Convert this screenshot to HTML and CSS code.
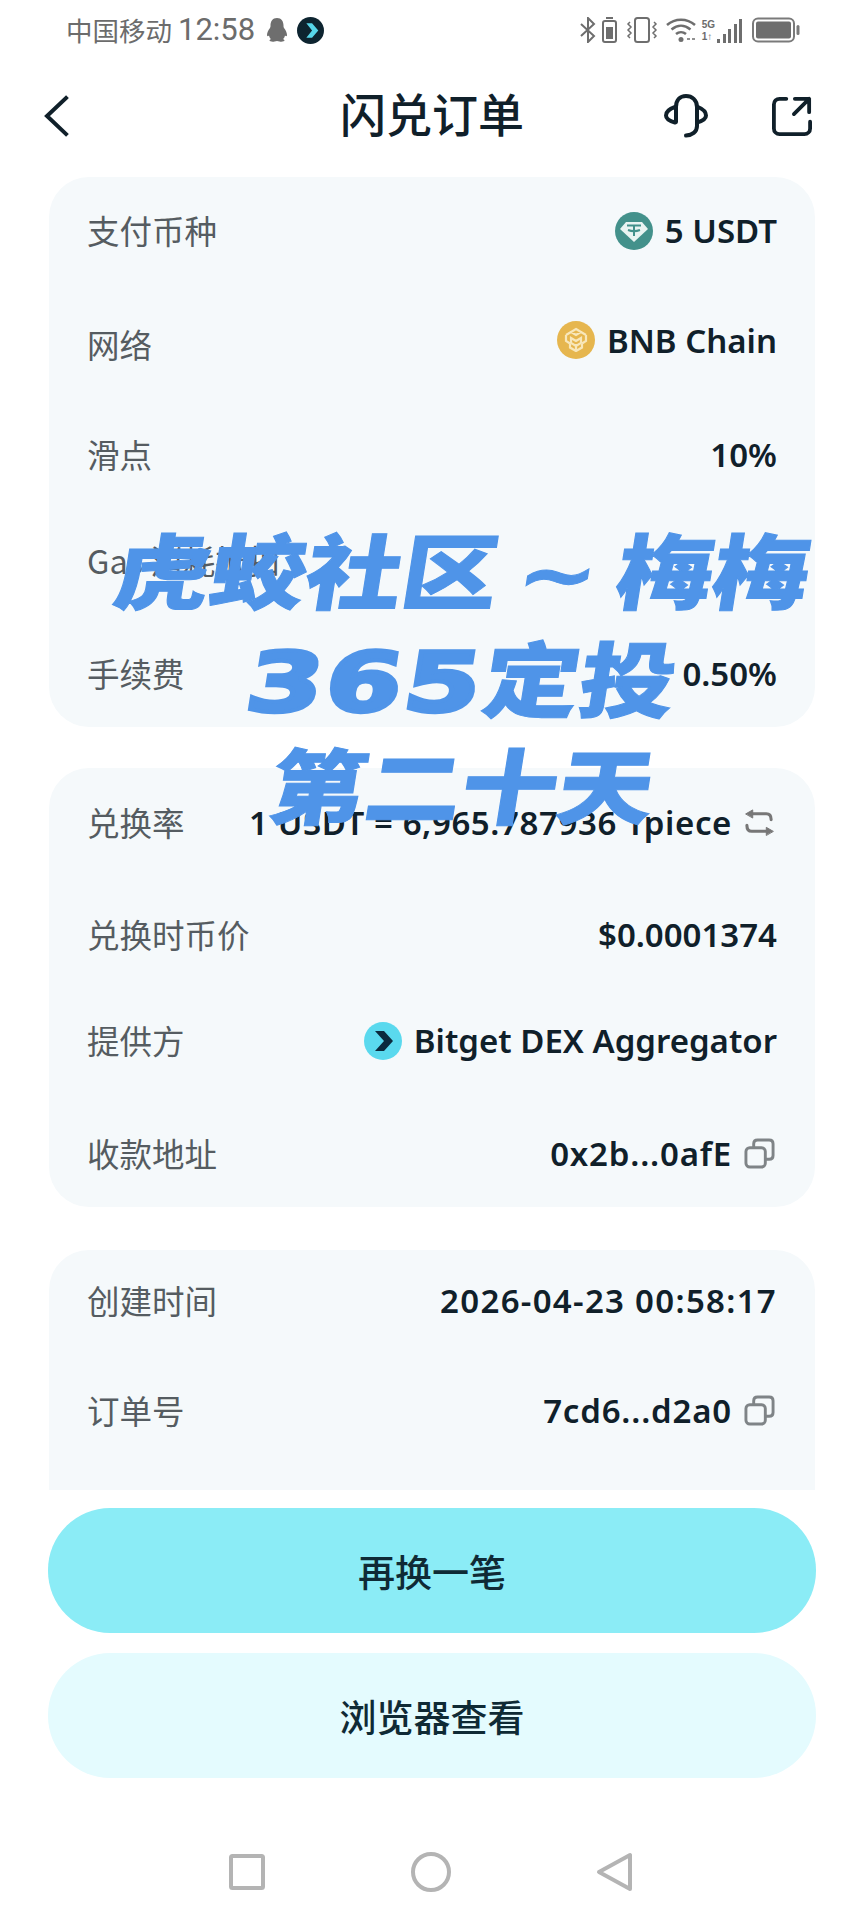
FILE: index.html
```html
<!DOCTYPE html>
<html lang="zh-CN">
<head>
<meta charset="utf-8">
<title>闪兑订单</title>
<link rel="stylesheet" href="styles.css">
</head>
<body>
<div class="screen">
  <div class="status">
    <div class="status-left">
      <span class="carrier">中国移动</span>
      <span class="clock">12:58</span>
      <svg class="ic-qq" viewBox="0 0 22 26"><path fill="#6e6e6e" d="M11 1c4.500 0 6.500 3.500 6.500 7.500 0 1 0 1.500.5 2.500 1.500 2 3 4.500 3 7 0 1.500-1 1.500-2 .5-.5 2-1 3-2 3.500 1 .5 1.500 1 1.500 1.500 0 1-3 1.500-5 1-1-.2-2-.4-2.500-.4s-1.500.2-2.500.4c-2 .5-5 0-5-1 0-.5.5-1 1.500-1.500-1-.5-1.500-1.500-2-3.500-1 1-2 1-2-.5 0-2.500 1.500-5 3-7 .5-1 .5-1.500.5-2.500C4.500 4.500 6.500 1 11 1z"/></svg>
      <svg class="ic-bg" viewBox="0 0 26 26"><circle cx="13" cy="13" r="13" fill="#0d2430"/><path d="M9 6h5.500l6 7-6 7H9l5.500-7z" fill="#56d6ea"/></svg>
    </div>
    <div class="status-right">
      <svg class="ic-bt" viewBox="0 0 18 26" fill="none" stroke="#6e6e6e" stroke-width="2"><path d="M2 7l13 12-6 6V1l6 6L2 19"/></svg>
      <svg class="ic-sim" viewBox="0 0 15 26" fill="none" stroke="#6e6e6e" stroke-width="2"><rect x="1" y="4" width="13" height="21" rx="2"/><path d="M4 1h7"/><rect x="4" y="10" width="7" height="12" fill="#6e6e6e" stroke="none"/></svg>
      <svg class="ic-vib" viewBox="0 0 32 26" fill="none" stroke="#6e6e6e" stroke-width="2"><rect x="9" y="1" width="14" height="24" rx="2.500"/><path d="M4 5l-2 2 3 3-3 3 3 3-3 3 2 2M28 5l2 2-3 3 3 3-3 3 3 3-2 2" stroke-width="1.500"/></svg>
      <svg class="ic-wifi" viewBox="0 0 30 26" fill="none" stroke="#6e6e6e" stroke-width="2.500"><path d="M1 8c8-7 20-7 28 0M5.500 12.500c6-5 13-5 19 0M10 17c3-2.500 7-2.500 10 0"/><circle cx="15" cy="22.500" r="2.500" fill="#6e6e6e" stroke="none"/><path d="M21 22h3M26 22h3" stroke-width="1.500"/></svg>
      <div class="signal">
        <div class="sig-labels"><span>5G</span><span>1↑</span></div>
        <div class="bars"><i class="b1"></i><i class="b2"></i><i class="b3"></i><i class="b4"></i><i class="b5"></i></div>
      </div>
      <svg class="ic-batt" viewBox="0 0 48 26"><rect x="1" y="1.500" width="41" height="23" rx="5" fill="none" stroke="#7a7a7a" stroke-width="2"/><rect x="4" y="4.500" width="35" height="17" rx="2" fill="#6e6e6e"/><rect x="44.500" y="8" width="3" height="10" rx="1.500" fill="#7a7a7a"/></svg>
    </div>
  </div>

  <header class="nav">
    <svg class="ic-back" viewBox="0 0 26 42" fill="none" stroke="#10202a" stroke-width="4" stroke-linecap="square"><path d="M23 3L4 21l19 18"/></svg>
    <h1 class="title">闪兑订单</h1>
    <div class="nav-actions">
      <svg class="ic-support" viewBox="0 0 44 44" fill="none" stroke="#10202a" stroke-width="4" stroke-linecap="round"><path d="M12 28V13C12 6 16 2 22 2s11 4 11 11v19c0 6-5 9-11 9.500"/><path d="M11 13C5 15 2 18.500 2 21.500S5.500 27 11 28.500M34 13c5 2 8 5.500 8 8.500s-3.500 5.500-9 7"/></svg>
      <svg class="ic-share" viewBox="0 0 42 42" fill="none" stroke="#10202a" stroke-width="4" stroke-linecap="round" stroke-linejoin="round"><path d="M15 3H8C4.500 3 2 5.500 2 9v25c0 3.500 2.500 6 6 6h26c3.500 0 6-2.500 6-6v-7"/><path d="M23 19L39 3M24 3h15v14"/></svg>
    </div>
  </header>

  <main class="content">
    <section class="card card-a">
      <div class="row r1"><span class="label">支付币种</span><span class="value">
        <svg class="coin" viewBox="0 0 38 38"><circle cx="19" cy="19" r="19" fill="#43918b"/><path d="M11 10h16l6 7-14 13L5 17z" fill="#e9f4f2"/><path d="M12 13.500h14M19 13.500V24M13 18c4 1.500 8 1.500 12 0" fill="none" stroke="#43918b" stroke-width="2"/></svg>5 USDT</span></div>
      <div class="row r2"><span class="label">网络</span><span class="value value-up">
        <svg class="coin" viewBox="0 0 38 38"><circle cx="19" cy="19" r="19" fill="#e6b64e"/><g fill="none" stroke="#f8e7bb" stroke-width="2.200"><path d="M19 8l5 3-5 3-5-3zM9 14l5-3M29 14l-5-3M9 14v6l4 2.500M29 14v6l-4 2.500M19 30l-6-3.500V23M19 30l6-3.500V23M19 30v-7M14 17l5 3 5-3v5l-5 3-5-3z"/></g></svg>BNB Chain</span></div>
      <div class="row r3"><span class="label">滑点</span><span class="value">10%</span></div>
      <div class="row r4"><span class="label">Gas 消耗抵扣</span></div>
      <div class="row r5"><span class="label">手续费</span><span class="value">0.50%</span></div>
    </section>

    <section class="card card-b">
      <div class="row r6"><span class="label">兑换率</span><span class="value value-rate">1 USDT = 6,965.787936 Tpiece
        <svg class="act" viewBox="0 0 32 30" fill="none" stroke="#777" stroke-width="3.200" stroke-linecap="round" stroke-linejoin="round"><path d="M7 6h16c3 0 5 2 5 6M3 18c0 4 2 6 5 6h16"/><path d="M2 6l7-4v8zM30 24l-7-4v8z" fill="#777" stroke-width="1"/></svg></span></div>
      <div class="row r7"><span class="label">兑换时币价</span><span class="value">$0.0001374</span></div>
      <div class="row r8"><span class="label">提供方</span><span class="value">
        <svg class="coin" viewBox="0 0 38 38"><circle cx="19" cy="19" r="19" fill="#5ad9ee"/><path d="M11 9h9l9 10-9 10h-9l9-10z" fill="#0b2a3d"/></svg>Bitget DEX Aggregator</span></div>
      <div class="row r9"><span class="label">收款地址</span><span class="value value-hash">0x2b...0afE
        <svg class="act" viewBox="0 0 32 32" fill="none" stroke="#7f8487" stroke-width="3"><rect x="2" y="10" width="20" height="20" rx="4"/><path d="M10 10V6c0-2.500 1.500-4 4-4h12c2.500 0 4 1.500 4 4v12c0 2.500-1.500 4-4 4h-4"/></svg></span></div>
    </section>

    <section class="card card-c">
      <div class="row r10"><span class="label">创建时间</span><span class="value value-date">2026-04-23 00:58:17</span></div>
      <div class="row r11"><span class="label">订单号</span><span class="value value-hash">7cd6...d2a0
        <svg class="act" viewBox="0 0 32 32" fill="none" stroke="#7f8487" stroke-width="3"><rect x="2" y="10" width="20" height="20" rx="4"/><path d="M10 10V6c0-2.500 1.500-4 4-4h12c2.500 0 4 1.500 4 4v12c0 2.500-1.500 4-4 4h-4"/></svg></span></div>
    </section>
  </main>

  <div class="actions">
    <button class="btn btn-primary">再换一笔</button>
    <button class="btn btn-soft">浏览器查看</button>
  </div>

  <nav class="sysnav">
    <svg class="sys" viewBox="0 0 40 40" fill="none" stroke="#b4b4b4" stroke-width="4"><rect x="4" y="4" width="32" height="32" rx="1.500"/></svg>
    <svg class="sys" viewBox="0 0 40 40" fill="none" stroke="#b4b4b4" stroke-width="4"><circle cx="20" cy="20" r="18"/></svg>
    <svg class="sys" viewBox="0 0 40 40" fill="none" stroke="#b4b4b4" stroke-width="4" stroke-linejoin="round"><path d="M35 3v34L4 20z"/></svg>
  </nav>

  <div class="overlay">
    <div class="ov-line">虎蛟社区 ~ 梅梅</div>
    <div class="ov-line"><span class="ov-num">365</span>定投</div>
    <div class="ov-line">第二十天</div>
  </div>
</div>
</body>
</html>
```
FILE: styles.css
```css
* { box-sizing: border-box; }
html, body { margin: 0; padding: 0; background: #fff; }
body { font-family: "Noto Sans", "Noto Sans CJK SC", sans-serif; color: #10202a; }
.screen { position: relative; width: 864px; height: 1920px; overflow: hidden; display: flex; flex-direction: column; background: #fff; }

.status { height: 60px; flex: none; display: flex; justify-content: space-between; align-items: center; padding: 0 64px 0 66px; color: #6c6c6c; }
.status-left { display: flex; align-items: center; }
.status-right { display: flex; align-items: center; gap: 6px; }
.carrier { font-family: "Noto Sans CJK SC", sans-serif; font-size: 26.500px; line-height: 32px; }
.clock { font-family: Roboto, sans-serif; font-size: 31px; margin-left: 6px; line-height: 32px; }
.ic-qq { width: 22px; height: 26px; margin-left: 11px; }
.ic-bg { width: 27px; height: 27px; margin-left: 9px; }
.ic-bt { width: 18px; height: 26px; }
.ic-sim { width: 15px; height: 26px; margin-left: -1px; }
.ic-vib { width: 32px; height: 26px; margin-left: 3px; }
.ic-wifi { width: 30px; height: 26px; margin-left: 2px; }
.ic-batt { width: 48px; height: 26px; margin-left: 4px; }
.signal { display: flex; align-items: flex-end; gap: 2px; height: 26px; }
.sig-labels { display: flex; flex-direction: column; font-family: "Liberation Sans", sans-serif; font-size: 10px; line-height: 12px; font-weight: 700; color: #6c6c6c; }
.bars { display: flex; align-items: flex-end; gap: 2.500px; }
.bars i { display: block; width: 3px; background: #6e6e6e; }
.b1 { height: 4px; }
.b2 { height: 9px; }
.b3 { height: 14px; }
.b4 { height: 19px; }
.b5 { height: 24px; }

.nav { flex: none; height: 114px; padding: 0 52px 2px 43px; display: flex; align-items: center; justify-content: space-between; position: relative; }
.ic-back { width: 26px; height: 42px; }
.title { position: absolute; left: 0; right: 0; top: 22px; margin: 0; text-align: center; font-family: "Noto Sans CJK SC", sans-serif; font-size: 46px; line-height: 60px; font-weight: 500; color: #10202a; }
.nav-actions { display: flex; align-items: center; gap: 64px; position: relative; }
.ic-support { width: 44px; height: 44px; }
.ic-share { width: 40px; height: 40px; }

.content { flex: none; height: 1316px; overflow: hidden; padding: 3px 49px 0; display: flex; flex-direction: column; gap: 41px; }
.card { flex: none; background: #f5f9fb; border-radius: 40px; padding: 0 38px; }
.card-a { height: 550px; }
.card-b { height: 439px; }
.card-c { height: 300px; margin-top: 2px; }
.row { display: flex; justify-content: space-between; align-items: center; }
.r1 { height: 105px; }
.r2 { height: 122px; }
.r3 { height: 98px; }
.r4 { height: 115px; }
.r5 { height: 110px; }
.r6 { height: 106px; }
.r7 { height: 118px; }
.r8 { height: 95px; }
.r9 { height: 130px; }
.r10 { height: 99px; }
.r11 { height: 121px; }
.label { font-family: "Noto Sans CJK SC", sans-serif; font-size: 32.500px; color: #555c61; white-space: nowrap; }
.value { display: flex; align-items: center; gap: 12px; padding-top: 2px; font-size: 33px; font-weight: 600; color: #10202a; white-space: nowrap; }
.value-up { padding-top: 0; margin-bottom: 6px; }
.value-rate { letter-spacing: 0.6px; }
.value-hash { letter-spacing: 0.8px; }
.value-date { letter-spacing: 1.300px; }
.coin { width: 38px; height: 38px; flex: none; }
.act { width: 31px; height: 31px; flex: none; margin-right: 2px; }

.actions { flex: none; display: flex; flex-direction: column; gap: 20px; padding: 18px 48px 0; }
.btn { display: block; width: 100%; height: 125px; border: 0; border-radius: 62px; font-family: "Noto Sans CJK SC", sans-serif; font-size: 37px; font-weight: 500; color: #0f2a35; }
.btn-primary { background: #8becf6; }
.btn-soft { background: #e4fbfe; }

.sysnav { position: absolute; left: 227px; bottom: 28px; width: 408px; display: flex; justify-content: space-between; align-items: center; }
.sys { width: 40px; height: 40px; }

.overlay { position: absolute; left: 30px; right: -30px; top: 521px; text-align: center; font-family: "DejaVu Sans", "Noto Sans CJK SC", sans-serif; font-weight: 900; font-size: 82px; line-height: 107.500px; color: #4f94e8; white-space: nowrap; }
.ov-line { transform: skewX(-9deg) scaleX(1.17); word-spacing: -12px; -webkit-text-stroke: 1px #4f94e8; }
.ov-num { display: inline-block; letter-spacing: 2px; margin: 0 12px; -webkit-text-stroke: 4px #4f94e8; transform: scaleX(1.14); }
```
